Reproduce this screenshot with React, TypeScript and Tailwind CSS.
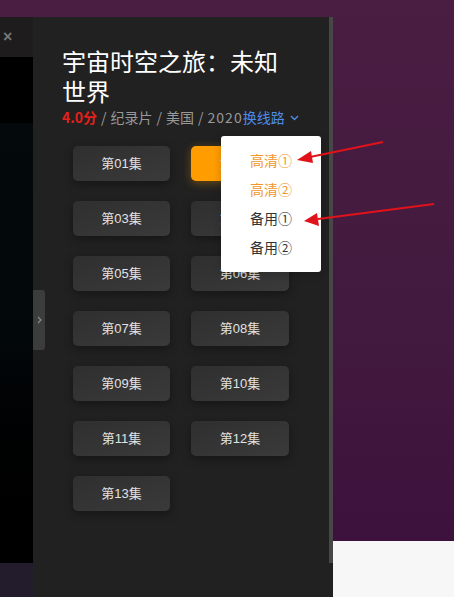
import React from 'react';

const episodes = Array.from({ length: 13 }, (_, i) => `第${String(i + 1).padStart(2, '0')}集`);

const lines = [
  { label: '高清①', active: true },
  { label: '高清②', active: true },
  { label: '备用①', active: false },
  { label: '备用②', active: false },
];

const App: React.FC = () => {
  return (
    <div
      className="relative w-[454px] h-[597px] overflow-hidden flex bg-gradient-to-b from-[#4a1d43] via-[#431a3f] to-[#3b0f3b]"
      style={{ fontFamily: '"Liberation Sans", "Noto Sans CJK SC", sans-serif' }}
    >
      {/* left strip (video area) */}
      <div className="w-[33px] shrink-0 pt-[17px] flex flex-col">
        <div className="h-[40px] bg-[#1e1c1c] flex items-center pl-[3px]">
          <span className="text-[#777] text-[16px] font-bold leading-none">×</span>
        </div>
        <div className="h-[66px] bg-black" />
        <div className="h-[440px] bg-gradient-to-b from-[#04090c] via-[#02070a] to-[#000000]" />
        <div className="flex-1 bg-[#221c2d]" />
      </div>

      {/* panel */}
      <div className="relative w-[300px] shrink-0 mt-[17px] bg-[#212121] pt-[31px] pl-[29px]">
        <h1 className="w-[230px] text-white text-[24px] leading-[30px] font-normal">宇宙时空之旅：未知世界</h1>
        <div
          className="flex items-center text-[14px] leading-[18px] text-[#999]"
          style={{ fontFamily: '"Noto Sans CJK SC", sans-serif' }}
        >
          <span className="text-[#e3201b] font-bold">4.0分</span>
          <span className="mx-[4px]">/</span>
          <span>纪录片</span>
          <span className="mx-[4px]">/</span>
          <span>美国</span>
          <span className="mx-[4px]">/</span>
          <span className="tracking-[1px]">2020</span>
          <span className="text-[#4d8ce8]">换线路</span>
          <svg className="ml-[5px] mt-[2px]" width="9" height="6" viewBox="0 0 9 6" fill="none">
            <path d="M1 1l3.5 3.5L8 1" stroke="#4d8ce8" strokeWidth="1.4" />
          </svg>
        </div>

        <div className="grid grid-cols-[97px_98px] gap-x-[21px] gap-y-[20px] mt-[20px] ml-[11px]">
          {episodes.map((ep, i) => (
            <div
              key={ep}
              className={
                i === 1
                  ? 'h-[35px] rounded-[5px] bg-[#ff9d00] shadow-[0_2px_10px_rgba(255,157,0,0.35)] flex items-center justify-center text-white text-[13px]'
                  : 'h-[35px] rounded-[5px] bg-gradient-to-br from-[#2f2f2f] to-[#3a3a3a] shadow-[0_3px_10px_rgba(0,0,0,0.35)] flex items-center justify-center text-[#e2e2e2] text-[13px]'
              }
            >
              {ep}
            </div>
          ))}
        </div>

        {/* side handle */}
        <div className="absolute left-0 top-[273px] w-[12px] h-[60px] bg-[#3c3c3c] rounded-r-[3px] flex items-center justify-center">
          <svg width="5" height="8" viewBox="0 0 5 8" fill="none">
            <path d="M1 1l3 3-3 3" stroke="#8a8a8a" strokeWidth="1.2" />
          </svg>
        </div>

        {/* scrollbar */}
        <div className="absolute right-0 top-0 w-[4px] h-[546px] bg-[#474747]" />

        {/* line dropdown */}
        <div
          className="absolute left-[188px] top-[119px] w-[100px] py-[10px] bg-white rounded-[3px] shadow-[0_2px_8px_rgba(0,0,0,0.2)]"
          style={{ fontFamily: '"Noto Sans CJK SC", sans-serif' }}
        >
          {lines.map((l) => (
            <div
              key={l.label}
              className={`pl-[29px] text-[14px] leading-[29px] ${l.active ? 'text-[#f0962a]' : 'text-[#333]'}`}
            >
              {l.label}
            </div>
          ))}
        </div>
      </div>

      {/* right side */}
      <div className="flex-1 flex flex-col">
        <div className="flex-1" />
        <div className="h-[56px] bg-[#f7f7f7]" />
      </div>

      {/* annotation arrows */}
      <svg className="absolute left-0 top-0 pointer-events-none" width="454" height="597" viewBox="0 0 454 597">
        <line x1="383" y1="142" x2="310" y2="157" stroke="#e0121a" strokeWidth="2" />
        <polygon points="297,160 311,151 313,163" fill="#e0121a" />
        <line x1="434" y1="204" x2="318" y2="219" stroke="#e0121a" strokeWidth="2" />
        <polygon points="304,221 317,213 319,226" fill="#e0121a" />
      </svg>
    </div>
  );
};

export default App;
